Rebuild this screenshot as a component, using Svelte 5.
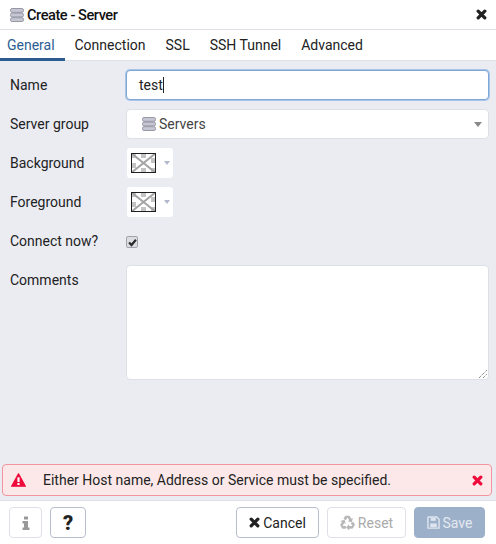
<script>
  const tabs = ["General", "Connection", "SSL", "SSH Tunnel", "Advanced"];
  const swatches = ["Background", "Foreground"];
  const recycleTurns = [0, 120, 240];
</script>

{#snippet serverIcon()}
  <svg class="server_icon" viewBox="0 0 14 14" width="14" height="14">
    <rect x="0.5" y="0.5" width="13" height="3.8" rx="1.6" fill="#c6c7d2" stroke="#9698a8" stroke-width="1" />
    <rect x="0.5" y="5.1" width="13" height="3.8" rx="1.6" fill="#c6c7d2" stroke="#9698a8" stroke-width="1" />
    <rect x="0.5" y="9.7" width="13" height="3.8" rx="1.6" fill="#c6c7d2" stroke="#9698a8" stroke-width="1" />
  </svg>
{/snippet}

{#snippet cross(size, color)}
  <svg viewBox="0 0 10 10" width={size} height={size}>
    <path d="M2 2 L8 8 M8 2 L2 8" stroke={color} stroke-width="3" stroke-linecap="round" fill="none" />
  </svg>
{/snippet}

<div class="dialog">
  <header class="title_bar">
    {@render serverIcon()}
    <span class="title">Create - Server</span>
    <span class="close">{@render cross(11, "#222")}</span>
  </header>

  <nav class="tabs">
    {#each tabs as tab, i}
      <span class="tab" class:active={i === 0}>{tab}</span>
    {/each}
  </nav>

  <main class="form">
    <div class="row">
      <label for="name">Name</label>
      <div class="field focused"><span>test</span><i class="caret"></i></div>
    </div>
    <div class="row">
      <label for="group">Server group</label>
      <div class="field select">
        {@render serverIcon()}
        <span>Servers</span>
        <b class="arrow"></b>
      </div>
    </div>
    {#each swatches as name}
      <div class="row">
        <label for={name}>{name}</label>
        <div class="swatch_box">
          <svg class="swatch" viewBox="0 0 25 20" width="25" height="20">
            <rect width="25" height="20" fill="#fff" />
            <path d="M0 0h5v5H0zM20 5h5v5h-5zM0 10h5v5H0zM20 15h5v5h-5zM10 0h5v5h-5zM10 15h5v5h-5z" fill="#c4c4c4" />
            <path d="M0 0 L25 20 M25 0 L0 20" stroke="#a4a4a4" stroke-width="2" />
            <rect x="0.5" y="0.5" width="24" height="19" fill="none" stroke="#1e1e1e" stroke-width="1" />
          </svg>
          <b class="swatch_arrow"></b>
        </div>
      </div>
    {/each}
    <div class="row">
      <label for="connect">Connect now?</label>
      <div class="check">
        <svg viewBox="0 0 10 10" width="9" height="9">
          <path d="M1.2 5 L3.9 7.8 L8.8 2" stroke="#2a2a2a" stroke-width="2.4" fill="none" />
        </svg>
      </div>
    </div>
    <div class="row comments_row">
      <label for="comments">Comments</label>
      <div class="textarea">
        <svg class="grip" viewBox="0 0 8 8" width="8" height="8">
          <path d="M0 8 L8 0 M4 8 L8 4" stroke="#555" stroke-width="1" stroke-dasharray="1 1" />
        </svg>
      </div>
    </div>
  </main>

  <div class="alert">
    <svg viewBox="0 0 14 13" width="15" height="14">
      <path d="M7 0.8 L13.4 12.3 H0.6 Z" fill="#ee0b3c" stroke="#ee0b3c" stroke-width="1.2" stroke-linejoin="round" />
      <rect x="6" y="4" width="2" height="4.4" fill="#fff" />
      <rect x="6" y="9.3" width="2" height="1.9" fill="#fff" />
    </svg>
    <span class="alert_text">Either Host name, Address or Service must be specified.</span>
    <span class="alert_close">{@render cross(11, "#ee0b3c")}</span>
  </div>

  <footer class="footer">
    <button class="btn square info" type="button">
      <svg viewBox="0 0 8 14" width="8" height="14">
        <path d="M2 0.5h4v3H2zM0.5 5h5.5v6.5h1.5v2.5H0.5v-2.5H2V7.5H0.5z" fill="#999" />
      </svg>
    </button>
    <button class="btn square help" type="button">?</button>
    <span class="spacer"></span>
    <button class="btn cancel" type="button">{@render cross(11, "#222")}Cancel</button>
    <button class="btn reset" type="button">
      <svg viewBox="0 0 14 14" width="15" height="15">
        {#each recycleTurns as turn}
          <path
            d="M4.9 0.8 H8.9 L10.6 3.6 L12 2.8 L11.1 6.8 L7.2 5.8 L8.6 5 L7 2.3 L5.4 5 L3.2 3.6 Z"
            fill="#b8b8b8"
            transform="rotate({turn} 7 7.6)"
          />
        {/each}
      </svg>
      Reset
    </button>
    <button class="btn save" type="button">
      <svg viewBox="0 0 14 14" width="13" height="13">
        <path d="M1.5 1 H10.5 L13 3.5 V13 H1 V1.5 Z" fill="none" stroke="#dfe5ee" stroke-width="1.5" />
        <rect x="4" y="2" width="5.5" height="3.2" fill="#dfe5ee" />
        <rect x="3.5" y="8" width="7" height="4" fill="#dfe5ee" />
      </svg>
      Save
    </button>
  </footer>
</div>

<style>
  :global(body) {
    margin: 0;
  }

  .dialog {
    width: 496px;
    height: 544px;
    display: flex;
    flex-direction: column;
    background: #ebecf2;
    color: #222;
    font-family: Roboto, sans-serif;
    font-size: 14px;
    overflow: hidden;
  }

  .title_bar {
    height: 29px;
    flex: none;
    display: flex;
    align-items: center;
    gap: 3px;
    padding: 0 10px;
    background: #fff;
    border-bottom: 1px solid #dde0e6;
  }

  .title {
    font-weight: 500;
    font-size: 14.6px;
    letter-spacing: -0.45px;
    flex: 1;
    color: #111;
  }

  .close {
    display: flex;
    margin-right: -1px;
  }

  .server_icon {
    flex: none;
  }

  .tabs {
    height: 31px;
    flex: none;
    box-sizing: border-box;
    display: flex;
    background: #fff;
    border-bottom: 1px solid #dde0e6;
  }

  .tab {
    padding: 0 10px;
    line-height: 30px;
    color: #222;
    font-size: 14px;
  }

  .tab.active {
    width: 64.5px;
    height: 31px;
    flex: none;
    padding: 0 0 0 7px;
    box-sizing: border-box;
    color: #2c5d92;
    border-bottom: 3px solid #2c5d92;
  }

  .form {
    flex: 1;
    display: flex;
    flex-direction: column;
    gap: 9px;
    padding: 9px 7px 0 10px;
  }

  .row {
    height: 30px;
    display: flex;
    align-items: center;
  }

  .row label {
    width: 116px;
    flex: none;
    color: #222;
  }

  .field {
    flex: 1;
    height: 30px;
    box-sizing: border-box;
    display: flex;
    align-items: center;
    padding-left: 12px;
    background: #fff;
    border: 1px solid #dde0e6;
    border-radius: 4px;
    color: #222;
  }

  .field.focused {
    border: 1px solid #7da7d8;
    box-shadow: 0 0 0 1px #a9c4e6;
  }

  .caret {
    width: 1px;
    height: 16px;
    background: #222;
  }

  .field.select {
    position: relative;
    padding-left: 15px;
    gap: 3px;
    color: #444;
  }

  .arrow {
    position: absolute;
    right: 6px;
    top: 12px;
    border: 4px solid transparent;
    border-top: 5px solid #888;
    border-bottom: 0;
  }

  .swatch_box {
    width: 46px;
    height: 30px;
    margin-left: 1px;
    display: flex;
    align-items: center;
    gap: 8px;
    padding-left: 4px;
    box-sizing: border-box;
    background: #fff;
    border-radius: 3px;
  }

  .swatch {
    flex: none;
    display: block;
  }

  .swatch_arrow {
    border: 3px solid transparent;
    border-top: 4px solid #b4b8cc;
    border-bottom: 0;
  }

  .check {
    width: 10px;
    height: 10px;
    margin-top: 2px;
    display: flex;
    align-items: center;
    justify-content: center;
    background: #dcdde2;
    border: 1px solid #a2a2a8;
    border-radius: 2px;
  }

  .comments_row {
    height: 115px;
    align-items: flex-start;
  }

  .comments_row label {
    line-height: 30px;
  }

  .textarea {
    flex: 1;
    height: 115px;
    box-sizing: border-box;
    position: relative;
    background: #fff;
    border: 1px solid #dde0e6;
    border-radius: 4px;
  }

  .grip {
    position: absolute;
    right: 1px;
    bottom: 1px;
  }

  .alert {
    height: 32px;
    flex: none;
    box-sizing: border-box;
    margin: 0 4px 4px 2px;
    display: flex;
    align-items: center;
    padding: 0 8px;
    background: #fce8e9;
    border: 1px solid #f2959f;
    border-radius: 4px;
  }

  .alert_text {
    flex: 1;
    margin-left: 17px;
    color: #222;
  }

  .alert_close {
    display: flex;
  }

  .footer {
    height: 44px;
    flex: none;
    box-sizing: border-box;
    display: flex;
    align-items: center;
    gap: 8px;
    padding: 0 11px 0 9px;
    background: #fff;
    border-top: 1px solid #dde0e6;
  }

  .spacer {
    flex: 1;
  }

  .btn {
    height: 31px;
    box-sizing: border-box;
    display: flex;
    align-items: center;
    justify-content: center;
    gap: 3px;
    padding: 0;
    background: #fff;
    border: 1px solid #b9bfce;
    border-radius: 4px;
    color: #222;
    font-family: Roboto, sans-serif;
    font-size: 14px;
  }

  .square.info {
    width: 33px;
    border-color: #dfe1e8;
  }

  .square.help {
    width: 36px;
    font-size: 20px;
    font-weight: 900;
  }

  .cancel {
    width: 83px;
  }

  .reset {
    width: 79px;
    color: #aaa;
    border-color: #dfe1e8;
  }

  .save {
    width: 71px;
    background: #9cb0c9;
    border-color: #9cb0c9;
    color: #e4e9f0;
  }
</style>
